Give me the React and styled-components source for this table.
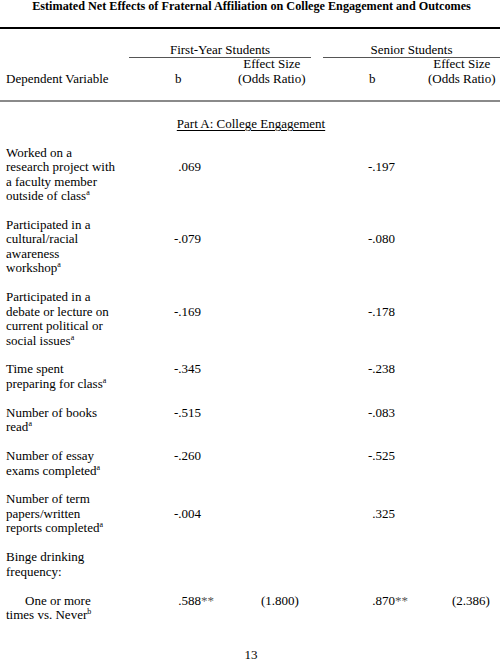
import React from "react";
import styled, { createGlobalStyle } from "styled-components";

const LINE = 14.45;
const COLS = "129px 91px 91px 12px 89px 88px";

const GlobalStyle = createGlobalStyle`
  html, body {
    margin: 0;
    padding: 0;
    background: #fff;
  }
  body {
    font-family: "Liberation Serif", "Times New Roman", serif;
    font-size: 13px;
    line-height: ${LINE}px;
    color: #000;
  }
`;

const Page = styled.div`
  width: 500px;
  height: 662px;
  overflow: hidden;
`;

const Title = styled.h1`
  margin: 0;
  height: 13px;
  font-size: 12.2px;
  font-weight: bold;
  line-height: 13px;
  text-align: center;
  padding-left: 3px;
`;

const ThickRule = styled.div`
  height: 2px;
  margin-top: 13.5px;
  background: #000;
`;

const ThinRule = styled.div`
  height: 2px;
  margin-top: 14px;
  background: #8a8a8a;
`;

const Grid = styled.div`
  display: grid;
  grid-template-columns: ${COLS};
  align-items: ${(p) => p.$align || "stretch"};
`;

const HeadGrid = styled(Grid)`
  margin-top: ${LINE}px;
`;

const GroupHead = styled.div`
  grid-column: ${(p) => p.$col} / span 2;
  text-align: center;
  border-bottom: 1px solid #555;
  margin-bottom: -1px;
`;

const HeadLabel = styled.div`
  grid-column: 1;
  padding-left: 6px;
  white-space: nowrap;
`;

const HeadB = styled.div`
  grid-column: ${(p) => p.$col};
  padding-left: 46px;
`;

const HeadEffect = styled.div`
  grid-column: ${(p) => p.$col};
  padding-left: ${(p) => p.$shift}px;
`;

const EffectStack = styled.div`
  display: inline-block;
  text-align: center;
  white-space: nowrap;
`;

const Section = styled.div`
  margin-top: 14.5px;
  text-align: center;
  padding-left: 2px;
`;

const SectionTitle = styled.span`
  text-decoration: underline;
  text-underline-offset: 2px;
  text-decoration-thickness: 1px;
`;

const Row = styled(Grid)`
  margin-top: ${LINE}px;
`;

const Label = styled.div`
  grid-column: 1;
  padding-left: 6px;
  white-space: nowrap;
  text-indent: ${(p) => (p.$indent ? 19 : 0)}px;
`;

const Sup = styled.sup`
  font-size: 8px;
  line-height: 0;
  vertical-align: 5px;
`;

const BCell = styled.div`
  grid-column: ${(p) => p.$col};
  padding-top: ${(p) => p.$at * LINE}px;
  display: flex;
  white-space: nowrap;
`;

const Num = styled.span`
  flex: none;
  width: 40px;
  margin-left: 32px;
  text-align: right;
`;

const Stars = styled.span`
  color: #555;
`;

const EffectCell = styled.div`
  grid-column: ${(p) => p.$col};
  padding-top: ${(p) => p.$at * LINE}px;
  padding-left: ${(p) => p.$shift}px;
  white-space: nowrap;
`;

const PageNumber = styled.div`
  margin-top: 25px;
  text-align: center;
  padding-left: 2px;
`;

const rows = [
  {
    label: ["Worked on a", "research project with", "a faculty member", "outside of class"],
    sup: "a",
    at: 1,
    fy: { b: ".069" },
    sr: { b: "-.197" },
  },
  {
    label: ["Participated in a", "cultural/racial", "awareness", "workshop"],
    sup: "a",
    at: 1,
    fy: { b: "-.079" },
    sr: { b: "-.080" },
  },
  {
    label: ["Participated in a", "debate or lecture on", "current political or", "social issues"],
    sup: "a",
    at: 1,
    fy: { b: "-.169" },
    sr: { b: "-.178" },
  },
  {
    label: ["Time spent", "preparing for class"],
    sup: "a",
    at: 0,
    fy: { b: "-.345" },
    sr: { b: "-.238" },
  },
  {
    label: ["Number of books", "read"],
    sup: "a",
    at: 0,
    fy: { b: "-.515" },
    sr: { b: "-.083" },
  },
  {
    label: ["Number of essay", "exams completed"],
    sup: "a",
    at: 0,
    fy: { b: "-.260" },
    sr: { b: "-.525" },
  },
  {
    label: ["Number of term", "papers/written", "reports completed"],
    sup: "a",
    at: 1,
    fy: { b: "-.004" },
    sr: { b: ".325" },
  },
  {
    label: ["Binge drinking", "frequency:"],
    at: 0,
  },
  {
    label: ["One or more", "times vs. Never"],
    sup: "b",
    indent: true,
    at: 0,
    fy: { b: ".588", stars: "**", es: "(1.800)" },
    sr: { b: ".870", stars: "**", es: "(2.386)" },
  },
];

const DataRow = ({ row }) => (
  <Row>
    <Label $indent={row.indent}>
      {row.label.map((line, i) => (
        <React.Fragment key={i}>
          {line}
          {i === row.label.length - 1 && row.sup && <Sup>{row.sup}</Sup>}
          {i < row.label.length - 1 && <br />}
        </React.Fragment>
      ))}
    </Label>
    {row.fy && (
      <BCell $col={2} $at={row.at}>
        <Num>{row.fy.b}</Num>
        {row.fy.stars && <Stars>{row.fy.stars}</Stars>}
      </BCell>
    )}
    {row.fy && row.fy.es && (
      <EffectCell $col={3} $at={row.at} $shift={41}>
        {row.fy.es}
      </EffectCell>
    )}
    {row.sr && (
      <BCell $col={5} $at={row.at}>
        <Num>{row.sr.b}</Num>
        {row.sr.stars && <Stars>{row.sr.stars}</Stars>}
      </BCell>
    )}
    {row.sr && row.sr.es && (
      <EffectCell $col={6} $at={row.at} $shift={40}>
        {row.sr.es}
      </EffectCell>
    )}
  </Row>
);

const EffectHeader = ({ col, shift }) => (
  <HeadEffect $col={col} $shift={shift}>
    <EffectStack>
      Effect Size
      <br />
      (Odds Ratio)
    </EffectStack>
  </HeadEffect>
);

export default function App() {
  return (
    <>
      <GlobalStyle />
      <Page>
        <Title>Estimated Net Effects of Fraternal Affiliation on College Engagement and Outcomes</Title>
        <ThickRule />

        <HeadGrid>
          <GroupHead $col={2}>First-Year Students</GroupHead>
          <GroupHead $col={5}>Senior Students</GroupHead>
        </HeadGrid>
        <Grid $align="end">
          <HeadLabel>Dependent Variable</HeadLabel>
          <HeadB $col={2}>b</HeadB>
          <EffectHeader col={3} shift={18} />
          <HeadB $col={5}>b</HeadB>
          <EffectHeader col={6} shift={16} />
        </Grid>
        <ThinRule />

        <Section>
          <SectionTitle>Part A: College Engagement</SectionTitle>
        </Section>

        {rows.map((row, i) => (
          <DataRow key={i} row={row} />
        ))}

        <PageNumber>13</PageNumber>
      </Page>
    </>
  );
}
